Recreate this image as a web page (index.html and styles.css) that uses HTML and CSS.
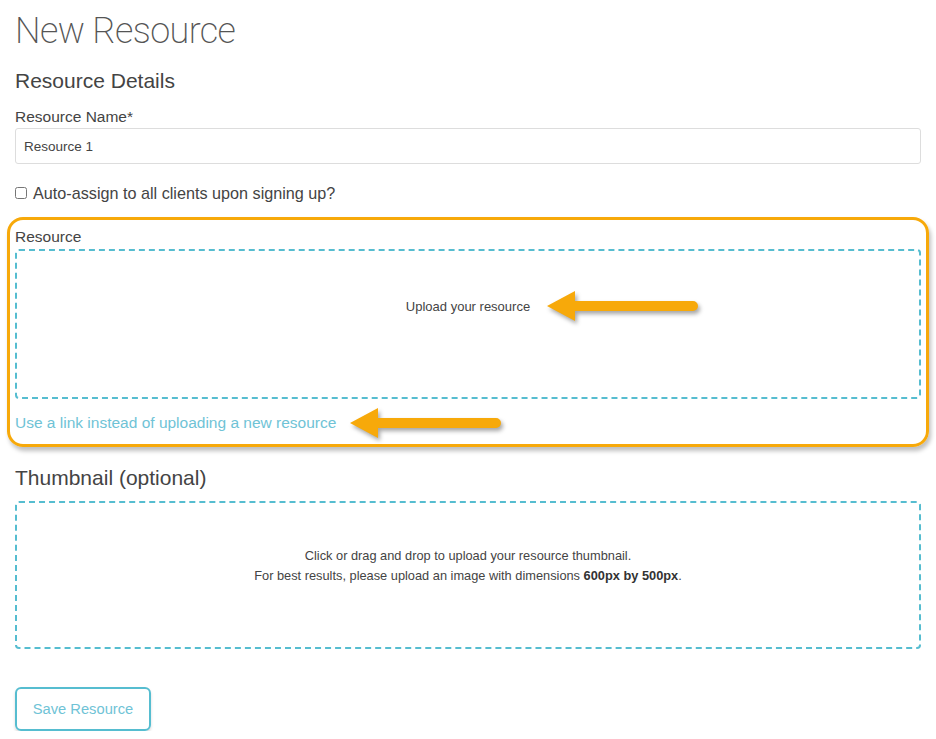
FILE: index.html
```html
<!DOCTYPE html>
<html lang="en">

<head>
    <meta charset="UTF-8">
    <meta name="viewport" content="width=device-width, initial-scale=1.0">
    <title>New Resource</title>
    <link rel="stylesheet" href="styles.css">
</head>

<body>
    <div class="page">
        <h1 class="page-title">New Resource</h1>
        <h3 class="section-title">Resource Details</h3>

        <div class="form-group">
            <label class="form-label" for="resourceName">Resource Name*</label>
            <input type="text" id="resourceName" class="form-input" value="Resource 1">
        </div>

        <label class="check-row">
            <input type="checkbox" class="check-box">
            <span>Auto-assign to all clients upon signing up?</span>
        </label>

        <div class="highlight">
            <div class="form-label">Resource</div>
            <div class="dropzone dropzone-resource">
                <span>Upload your resource</span>
                <svg class="arrow arrow-upload" width="160" height="40" viewBox="0 0 160 40">
                    <path d="M2 17 L30 2 L30 12 L148 12 A5 5 0 0 1 148 22 L30 22 L30 32 Z" fill="#f7a90a"/>
                </svg>
            </div>
            <div class="link-row">
                <a href="#" class="link">Use a link instead of uploading a new resource</a>
                <svg class="arrow arrow-link" width="160" height="40" viewBox="0 0 160 40">
                    <path d="M2 17 L30 2 L30 12 L148 12 A5 5 0 0 1 148 22 L30 22 L30 32 Z" fill="#f7a90a"/>
                </svg>
            </div>
        </div>

        <h3 class="section-title thumb-title">Thumbnail (optional)</h3>
        <div class="dropzone dropzone-thumb">
            <p>Click or drag and drop to upload your resource thumbnail.</p>
            <p>For best results, please upload an image with dimensions <b>600px by 500px</b>.</p>
        </div>

        <div class="save-button">Save Resource</div>
    </div>
</body>

</html>
```

FILE: styles.css
```css
:root {
    --text: #555;
    --teal: #56bdd0;
    --link: #6fc3d6;
    --orange: #f7a90a;
}

* {
    margin: 0;
    padding: 0;
    box-sizing: border-box;
}

body {
    font-family: 'Liberation Sans', Arial, sans-serif;
    color: var(--text);
    background: #fff;
}

.page {
    padding: 0 15px;
}

.page-title {
    font-family: Roboto, 'Liberation Sans', sans-serif;
    font-weight: 200;
    font-size: 36px;
    line-height: 44px;
    padding-top: 9px;
    color: #555;
    letter-spacing: -0.6px;
}

.section-title {
    font-weight: 400;
    font-size: 21px;
    line-height: 24px;
    margin-top: 16px;
    color: #444;
}

.form-group {
    margin-top: 15px;
}

.form-label {
    display: block;
    font-size: 15.5px;
    line-height: 18px;
    color: #444;
    margin-bottom: 2px;
}

.form-input {
    width: 100%;
    height: 36px;
    border: 1px solid #ddd;
    border-radius: 3px;
    padding: 0 8px;
    font-family: 'Liberation Sans', Arial, sans-serif;
    font-size: 13.5px;
    color: #444;
    outline: none;
}

.check-row {
    display: flex;
    align-items: center;
    gap: 6px;
    height: 18px;
    margin-top: 20px;
    font-size: 16.2px;
    color: #444;
}

.check-box {
    width: 12px;
    height: 12px;
    margin: 0;
}

/* orange annotation box around the resource field */
.highlight {
    margin: 15px -8px 0;
    padding: 8px 5px 12px;
    border: 3px solid var(--orange);
    border-radius: 16px;
    box-shadow: 2px 4px 4px rgba(0, 0, 0, 0.25);
}

.highlight .form-label {
    margin-bottom: 3px;
}

.dropzone {
    border: 2px dashed var(--teal);
    border-radius: 4px;
    display: flex;
    flex-direction: column;
    align-items: center;
    font-size: 13px;
    line-height: 20px;
    color: #444;
    position: relative;
}

.dropzone-resource {
    height: 150px;
    padding-top: 46px;
}

.dropzone-thumb {
    height: 148px;
    margin-top: 11px;
    padding-top: 43px;
    font-size: 12.8px;
}

.dropzone b {
    color: #333;
}

.link-row {
    position: relative;
    height: 18px;
    margin-top: 15px;
}

.link {
    font-size: 15.5px;
    line-height: 18px;
    color: var(--link);
    text-decoration: none;
}

.arrow {
    position: absolute;
    filter: drop-shadow(2px 3px 2px rgba(0, 0, 0, 0.35));
}

.arrow-upload {
    left: 528px;
    top: 38px;
}

.arrow-link {
    left: 333px;
    top: -8px;
}

.thumb-title {
    margin-top: 19px;
}

.save-button {
    display: inline-flex;
    align-items: center;
    justify-content: center;
    width: 136px;
    height: 44px;
    margin-top: 38px;
    border: 2px solid var(--teal);
    border-radius: 6px;
    color: var(--link);
    font-size: 14.7px;
    box-shadow: 0 2px 3px rgba(0, 0, 0, 0.15);
    cursor: pointer;
}
```
